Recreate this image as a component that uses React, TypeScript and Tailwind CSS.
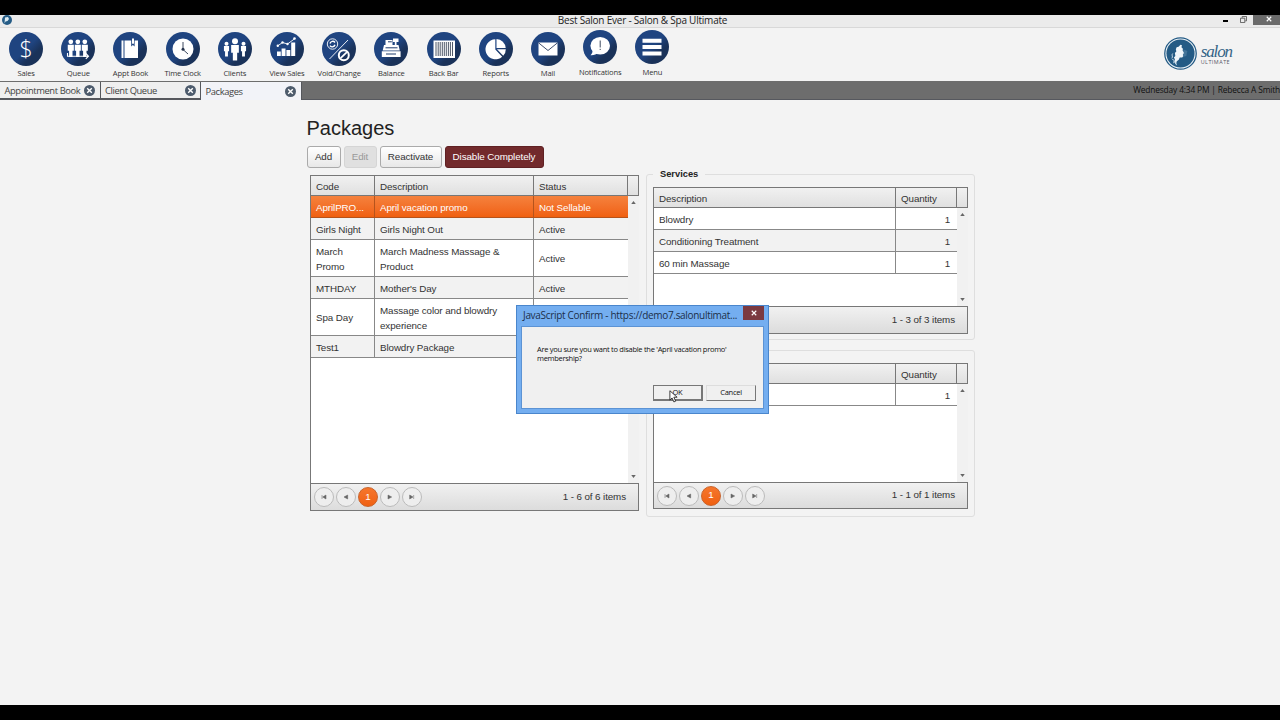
import type { ReactNode } from 'react'
import { clsx } from 'clsx'

interface ToolItem {
  label: string
  icon: ReactNode
  raised?: boolean
}

interface GridRow {
  cells: string[]
  tall?: boolean
  selected?: boolean
}

interface GridProps {
  headers: string[]
  rows: GridRow[]
  columns: string
  summary: string
  bodyHeight: string
  pagerHeight?: string
  numericLast?: boolean
}

const person = (x: number, y: number, s = 1) => (
  <g transform={`translate(${x} ${y}) scale(${s})`}>
    <circle cx="0" cy="-6" r="2.5" />
    <path d="M-3.2 -3h6.4v6.5h-1.4v6.500h-3.600v-6.500h-1.400z" />
  </g>
)

const tools: ToolItem[] = [
  {
    label: 'Sales',
    icon: (
      <text x="17" y="24.800" textAnchor="middle" fontSize="23" fontFamily="Open Sans" fontWeight="300">
        $
      </text>
    ),
  },
  {
    label: 'Queue',
    icon: (
      <>
        {person(9.800, 15.5, 0.95)}
        {person(16.800, 15.5, 0.95)}
        {person(23.800, 15.5, 0.95)}
        <path d="M6.500 21v3.200h21M24.800 21.500l2.700 2.700-2.700 2.700" fill="none" stroke="white" strokeWidth="1.1" />
      </>
    ),
  },
  {
    label: 'Appt Book',
    icon: (
      <>
        <path d="M8.5 8.500h2V26h-2zM11.500 8.500h6.700v6l1.700-1.600 1.700 1.600v-6h3.400V26H11.500z" />
        <path d="M19 6.500h2v5.800l-1-1-1 1z" />
      </>
    ),
  },
  {
    label: 'Time Clock',
    icon: (
      <>
        <circle cx="17" cy="17" r="10.5" />
        <path d="M17 10v7.500l5 4.500" fill="none" stroke="#26344d" strokeWidth="0.9" />
        <circle cx="17" cy="17.200" r="1.5" fill="#26344d" />
      </>
    ),
  },
  {
    label: 'Clients',
    icon: (
      <>
        {person(8.5, 16.5, 0.8)}
        {person(17, 16.500, 1.2)}
        {person(25.5, 16.5, 0.8)}
      </>
    ),
  },
  {
    label: 'View Sales',
    icon: (
      <>
        <path d="M7 19.500h3.800v4.500H7zM11.600 16.5h3.900V24h-3.900zM16.400 18h3.900v6h-3.900zM21.200 10.500h4V24h-4z" />
        <path d="M7.5 14l5-3.500 5 1.500L25 6.500" fill="none" stroke="white" strokeWidth="0.9" />
        <circle cx="7.8" cy="13.800" r="1.2" />
        <circle cx="12.5" cy="10.500" r="1.2" />
        <circle cx="17.5" cy="12" r="1.2" />
        <circle cx="24.5" cy="6.500" r="1.3" />
      </>
    ),
  },
  {
    label: 'Void/Change',
    icon: (
      <g fill="none" stroke="white">
        <path d="M26 8L7.500 27" strokeWidth="0.9" />
        <circle cx="10.500" cy="12" r="5.200" strokeWidth="0.900" />
        <path d="M8 11.500a2.800 2.800 0 0 1 5-1M13 12.800a2.800 2.800 0 0 1-5 .8" strokeWidth="1.400" />
        <circle cx="21.800" cy="23.200" r="5" strokeWidth="2" />
        <path d="M18.600 26.200l6.300-6" strokeWidth="1.800" />
      </g>
    ),
  },
  {
    label: 'Balance',
    icon: (
      <>
        <path d="M19 6.500h5.500V10H19zM20.800 10h1.700v3h-1.700zM11.500 8h7v6h-7zM10 13h14.500l1.300 5.500H8.700zM7.800 19.300h18.800V25H7.800z" />
        <path d="M14 9.800h3.800M11.500 15.800h12M12 22h10" fill="none" stroke="#1d3a6b" strokeWidth="1" />
      </>
    ),
  },
  {
    label: 'Back Bar',
    icon: (
      <>
        <path d="M6.500 8.500h21.500v17.500h-21.500z" />
        <path
          d="M9 10v14M11.200 10v14M13.200 10v14M15.300 10v14M17.300 10v14M19.300 10v14M21.400 10v14M23.400 10v14M25.500 10v14"
          fill="none"
          stroke="#3b4658"
          strokeWidth="0.9"
        />
      </>
    ),
  },
  {
    label: 'Reports',
    icon: (
      <>
        <path d="M16.300 17.500V7.300a10 10 0 1 0 6.900 17.400z" />
        <path d="M17.500 16V7a9.600 9.600 0 0 1 9.200 9z" />
        <path d="M18 17.200h8.800a9 9 0 0 1-2.600 6.600z" />
      </>
    ),
  },
  {
    label: 'Mail',
    icon: (
      <>
        <path d="M7.500 10.500h19v13h-19z" />
        <path d="M7.500 10.800L17 18.500l9.500-7.700" fill="none" stroke="#26395c" strokeWidth="0.9" />
      </>
    ),
  },
  {
    label: 'Notifications',
    raised: true,
    icon: (
      <>
        <ellipse cx="17.200" cy="15.800" rx="9.800" ry="8.800" />
        <path d="M9.500 19.500c.3 2.500-.4 4.300-2 5.700 3.500.2 6-.8 7.500-2.700z" />
        <path d="M17.200 10.500v7M17.200 18.800v1.200" fill="none" stroke="#26344d" strokeWidth="0.9" />
      </>
    ),
  },
  {
    label: 'Menu',
    raised: true,
    icon: <path d="M7.500 8.800h19v4h-19zM7.500 15.100h19v4h-19zM7.500 21.400h19v4h-19z" />,
  },
]

const packages: GridRow[] = [
  { cells: ['AprilPRO...', 'April vacation promo', 'Not Sellable'], selected: true },
  { cells: ['Girls Night', 'Girls Night Out', 'Active'] },
  { cells: ['March Promo', 'March Madness Massage & Product', 'Active'], tall: true },
  { cells: ['MTHDAY', "Mother's Day", 'Active'] },
  { cells: ['Spa Day', 'Massage color and blowdry experience', ''], tall: true },
  { cells: ['Test1', 'Blowdry Package', ''] },
]

const services: GridRow[] = [
  { cells: ['Blowdry', '1'] },
  { cells: ['Conditioning Treatment', '1'] },
  { cells: ['60 min Massage', '1'] },
]

const ToolButton = ({ label, icon, raised }: ToolItem) => (
  <button className={clsx('flex w-[52.2px] flex-col items-center', raised ? 'pt-[2px]' : 'pt-1')}>
    <svg viewBox="0 0 34 34" className="size-[34px] shrink-0" fill="white">
      <circle cx="17" cy="17" r="17" fill="url(#disc)" />
      {icon}
    </svg>
    <span
      className={clsx(
        'whitespace-nowrap text-[7.6px] leading-[10px] tracking-[-0.17px] text-[#333]',
        raised ? 'mt-[3px]' : 'mt-[2px]',
      )}
    >
      {label}
    </span>
  </button>
)

const Tab = ({ label, active }: { label: string; active?: boolean }) => (
  <div
    className={clsx(
      'flex w-[100.5px] items-center justify-between border-r border-[#55575c] pl-[4.5px] pr-[4.5px]',
      active ? 'h-[18px] bg-[#f2f3f8] pt-px' : 'h-[17px] border-b bg-[#efefef] pt-px',
    )}
  >
    <span className="whitespace-nowrap text-[9.4px] leading-[14px] tracking-[-0.4px] text-[#444]">{label}</span>
    <svg viewBox="0 0 12 12" className="mb-px size-[11px]">
      <circle cx="6" cy="6" r="6" fill="#4d5b6c" />
      <path d="M3.500 3.500l5 5M8.500 3.500l-5 5" stroke="white" strokeWidth="1.500" />
    </svg>
  </div>
)

const arrowPaths = {
  first: 'M3 3v6M9 3v6L4 6z',
  prev: 'M8.500 3v6L3 6z',
  next: 'M3 3v6l5.500-3z',
  last: 'M2.500 3v6l5-3zM8.500 3v6',
}

const PagerArrow = ({ kind }: { kind: keyof typeof arrowPaths }) => (
  <button className="flex size-5 items-center justify-center rounded-full border border-[#bbb] bg-[#eee]">
    <svg viewBox="0 0 12 12" className="size-[8px]" fill="#666" stroke="#666" strokeWidth="0.8">
      <path d={arrowPaths[kind]} />
    </svg>
  </button>
)

const Grid = ({
  headers,
  rows,
  columns,
  summary,
  bodyHeight,
  pagerHeight = 'h-[27px]',
  numericLast,
}: GridProps) => (
  <div className="border border-[#777] bg-white text-[9.8px] leading-[14.6px] tracking-[-0.09px] text-[#333]">
    <div className={clsx('grid h-5 border-b border-[#777] bg-linear-to-b from-[#f1f1f1] to-[#e0e0e0]', columns)}>
      {headers.map((header) => (
        <div key={header} className="flex items-center border-r border-[#777] pl-[5px] pt-[3px]">
          {header}
        </div>
      ))}
    </div>
    <div className={clsx('flex', bodyHeight)}>
      <div className="flex-1">
        {rows.map((row, i) => (
          <div
            key={row.cells[0]}
            className={clsx(
              'grid border-b',
              columns,
              row.tall ? 'h-[37px]' : 'h-[22px]',
              row.selected
                ? 'border-[#b5531c] bg-linear-to-b from-[#f5813c] to-[#f0600f] text-white'
                : 'border-[#888]',
              !row.selected && i % 2 === 1 && 'bg-[#f2f2f2]',
            )}
          >
            {row.cells.map((cell, j) => {
              const last = j === row.cells.length - 1
              return (
                <div
                  key={j}
                  className={clsx(
                    'flex items-center pl-[5px] pt-[3px]',
                    last ? 'pr-[7px]' : 'border-r pr-[5px]',
                    row.selected ? 'border-[#b5531c]' : 'border-[#888]',
                    last && numericLast && 'justify-end',
                  )}
                >
                  {cell}
                </div>
              )
            })}
          </div>
        ))}
      </div>
      <div className="-ml-[10px] flex w-[11px] shrink-0 flex-col items-center justify-between bg-[#f1f1f1] py-[5px]">
        <svg viewBox="0 0 6 4" className="h-[3px] w-[5px]" fill="#666">
          <path d="M0 4l3-4 3 4z" />
        </svg>
        <svg viewBox="0 0 6 4" className="h-[3px] w-[5px]" fill="#666">
          <path d="M0 0l3 4 3-4z" />
        </svg>
      </div>
    </div>
    <div
      className={clsx(
        'flex items-center justify-between border-t border-[#777] bg-linear-to-b from-[#f1f1f1] to-[#dcdcdc] pl-[3px] pr-3',
        pagerHeight,
      )}
    >
      <div className="flex gap-[2px]">
        <PagerArrow kind="first" />
        <PagerArrow kind="prev" />
        <span className="flex size-5 items-center justify-center rounded-full border border-[#c9622a] bg-linear-to-b from-[#f5762c] to-[#f0600f] text-white">
          1
        </span>
        <PagerArrow kind="next" />
        <PagerArrow kind="last" />
      </div>
      <span>{summary}</span>
    </div>
  </div>
)

const plainButton =
  'h-[22px] rounded-[3px] border border-[#aaa] bg-linear-to-b from-white to-[#e8e8e8] text-[#333]'

const Logo = () => (
  <div className="flex items-center gap-[4px]">
    <svg viewBox="0 0 34 34" className="size-[33px]">
      <circle cx="17" cy="17" r="16.200" fill="#eef4f8" stroke="#245b85" strokeWidth="1.300" />
      <circle cx="17" cy="17" r="14.500" fill="#245b85" />
      <path
        d="M13 10.500l2-.5 2-2 1.500.5-.5 2 1.500 1.500-.3 2 1.600 2.700-1.300.8.2 2.500-1 1-2.500.2-1 2.300-2 1.500-1 3-1.500-2 .5-3-1-2 1.500-1.500-.5-3 1.500-1.500-.5-2.500z"
        fill="#f0f6fa"
      />
      <path d="M20 13l4 1.500-1 5-4 1z" fill="#9fc0d6" opacity="0.25" />
      <path d="M9 17c-2 2 1 3-1 5M8.500 23c2 0 2 2 1.500 4M11 25c1.500 1 1 2.500 2 4" fill="none" stroke="#c5dae7" />
    </svg>
    <div className="flex flex-col pt-[2px] text-[#346486]">
      <span className="font-['Liberation_Serif',serif] text-[17px] italic leading-[15px] tracking-[-1.1px]">
        salon
      </span>
      <span className="text-[5.4px] leading-[7px] tracking-[0.5px] text-[#556]">ULTIMATE</span>
    </div>
  </div>
)

const ConfirmDialog = () => (
  <div className="absolute left-[516px] top-[305px] h-[109px] w-[253px] border border-[#4a86cc] bg-[#74aef0] px-1 pb-1 font-['Open_Sans',sans-serif]">
    <div className="flex h-5 items-start justify-between pl-[2px]">
      <span className="mt-[2px] whitespace-nowrap text-[10px] leading-[14px] tracking-[-0.31px] text-[#1c2f4a]">
        JavaScript Confirm - https://demo7.salonultimat...
      </span>
      <button className="flex h-[14px] w-[21px] items-center justify-center bg-[#7b3a40]">
        <svg viewBox="0 0 8 8" className="size-[6px]">
          <path d="M1 1l6 6M7 1L1 7" stroke="white" strokeWidth="1.500" />
        </svg>
      </button>
    </div>
    <div className="flex h-[83px] flex-col justify-between border border-[#5c93d4] bg-[#f0f0f0] pb-[7px] pl-[15px] pr-[7px] pt-[18px] text-[7.5px] tracking-[-0.28px] text-[#111]">
      <p className="leading-[9px]">
        Are you sure you want to disable the 'April vacation promo'
        <br />
        membership?
      </p>
      <div className="flex justify-end gap-[3px] leading-none">
        <button className="h-4 w-[50px] border border-b-2 border-r-2 border-[#777] bg-[#f0f0f0]">OK</button>
        <button className="h-4 w-[50px] border border-b-[#777] border-l-[#ddd] border-r-[#777] border-t-[#ddd] bg-[#f0f0f0]">
          Cancel
        </button>
      </div>
    </div>
    <svg viewBox="0 0 12 18" className="absolute left-[152px] top-[84px] h-[13px] w-[9px]">
      <path d="M1 1v13l3-3 2.500 5.500 2.500-1-2.500-5.500H11z" fill="white" stroke="#222" strokeWidth="1.200" />
    </svg>
  </div>
)

const App = () => (
  <div className="relative flex h-[720px] w-[1280px] flex-col overflow-hidden bg-[#f3f3f3] font-['Liberation_Sans',Arial,sans-serif]">
    <svg className="absolute size-0">
      <defs>
        <linearGradient id="disc" x1="0" y1="0" x2="1" y2="1">
          <stop offset="0.500" stopColor="#1f4480" />
          <stop offset="0.700" stopColor="#1a3259" />
        </linearGradient>
      </defs>
    </svg>
    <div className="h-[15px] shrink-0 bg-black" />
    <header className="font-['Open_Sans',sans-serif]">
      <div className="flex h-[13px] items-start justify-between border-b border-[#d8d8d8] bg-[#ebebeb]">
        <svg viewBox="0 0 10 10" className="ml-[2px] size-[10px]">
          <circle cx="5" cy="5" r="5" fill="#245b85" />
          <path d="M3 2.500l3-.5 1 2-1.500 2-2 .500-1 2z" fill="#dcebf3" />
        </svg>
        <h1 className="ml-[50px] whitespace-nowrap text-[10px] leading-[10px] tracking-[-0.22px] text-[#222]">
          Best Salon Ever - Salon &amp; Spa Ultimate
        </h1>
        <div className="flex">
          <span className="mr-[12px] mt-[5px] h-[2px] w-[5px] bg-black" />
          <svg viewBox="0 0 8 8" className="mr-[6px] mt-px size-[7px]" fill="none" stroke="#555">
            <path d="M2.500 2V.500h5v5H6M.500 2.500h5v5h-5z" />
          </svg>
          <span className="flex h-[10px] w-[27px] items-center justify-center bg-[#6b6b6b]">
            <svg viewBox="0 0 8 8" className="mb-[2px] ml-1 size-[6px]">
              <path d="M1 1l6 6M7 1L1 7" stroke="white" strokeWidth="1.500" />
            </svg>
          </span>
        </div>
      </div>
      <div className="flex h-[53px] items-start justify-between">
        <nav className="flex">
          {tools.map((tool) => (
            <ToolButton key={tool.label} {...tool} />
          ))}
        </nav>
        <div className="mr-[48px] mt-[9px]">
          <Logo />
        </div>
      </div>
      <div className="flex h-[19px] items-start justify-between border-b border-[#56585e] bg-[#6d6d6d] pt-px">
        <div className="flex">
          <Tab label="Appointment Book" />
          <Tab label="Client Queue" />
          <Tab label="Packages" active />
        </div>
        <span className="whitespace-nowrap text-[8.400px] leading-[16px] tracking-[-0.16px] text-[#111]">
          Wednesday 4:34 PM | Rebecca A Smith
        </span>
      </div>
    </header>

    <main className="flex-1 pl-[306.5px] pt-[16px]">
      <h2 className="text-[20px] leading-6 text-[#222]">Packages</h2>
      <div className="mt-[6px] flex gap-[3px] text-[9.8px] tracking-[-0.09px]">
        <button className={clsx(plainButton, 'w-[34px]')}>Add</button>
        <button className="h-[22px] w-[33px] rounded-[3px] border border-[#d5d5d5] bg-[#e0e0e0] text-[#999]">
          Edit
        </button>
        <button className={clsx(plainButton, 'w-[62px]')}>Reactivate</button>
        <button className="h-[22px] w-[99px] rounded-[3px] border border-[#5f2023] bg-[#722a2c] text-white">
          Disable Completely
        </button>
      </div>
      <div className="ml-[3.500px] flex gap-[7px]">
        <div className="mt-[7px] w-[329px]">
          <Grid
            headers={['Code', 'Description', 'Status']}
            rows={packages}
            columns="grid-cols-[64px_159px_94px_10px]"
            summary="1 - 6 of 6 items"
            bodyHeight="h-[287px]"
          />
        </div>
        <div className="mt-[6px] flex w-[329px] flex-col gap-[10px]">
          <section className="h-[166px] rounded-[3px] border border-[#dedede] px-[6px]">
            <h3 className="-mt-[7px] flex h-[13px] w-fit items-center bg-[#f3f3f3] px-[7px] text-[9.3px] font-bold text-[#222]">
              Services
            </h3>
            <div className="mt-[6px] w-[315px]">
              <Grid
                headers={['Description', 'Quantity']}
                rows={services}
                columns="grid-cols-[242px_61px_10px]"
                summary="1 - 3 of 3 items"
                bodyHeight="h-[98px]"
                numericLast
              />
            </div>
          </section>
          <section className="h-[167px] rounded-[3px] border border-[#dedede] px-[6px] pt-[12px]">
            <div className="w-[315px]">
              <Grid
                headers={['', 'Quantity']}
                rows={[{ cells: ['', '1'] }]}
                columns="grid-cols-[242px_61px_10px]"
                summary="1 - 1 of 1 items"
                bodyHeight="h-[98px]"
                pagerHeight="h-[26px]"
                numericLast
              />
            </div>
          </section>
        </div>
      </div>
    </main>
    <div className="h-[15px] shrink-0 bg-black" />
    <ConfirmDialog />
  </div>
)

export default App
